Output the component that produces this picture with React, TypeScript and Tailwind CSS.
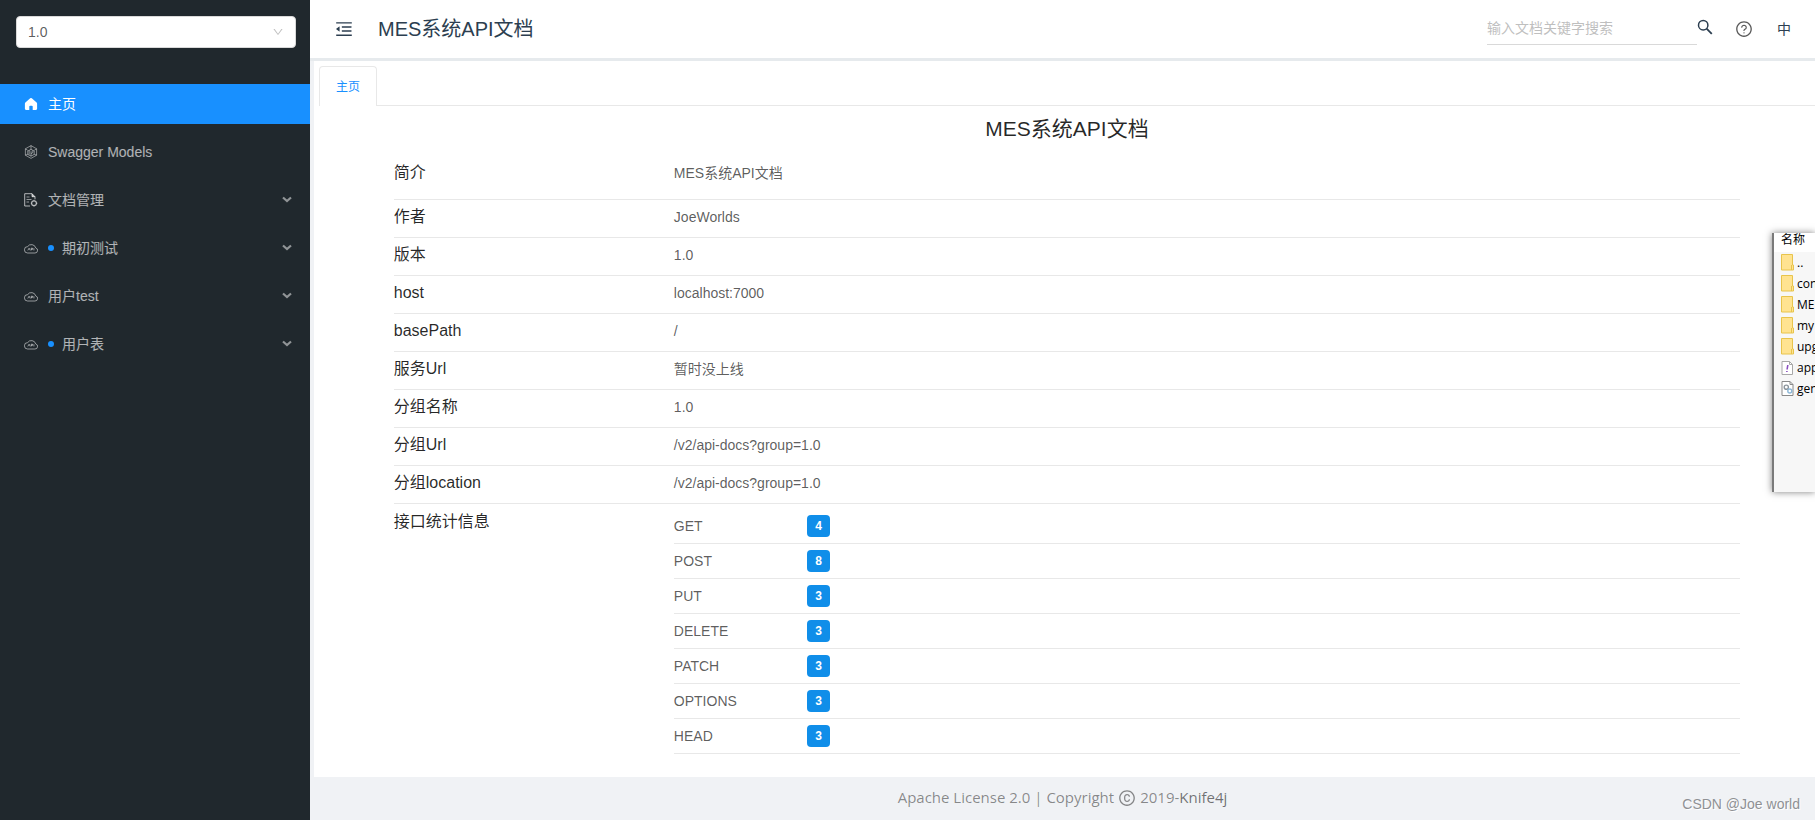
import type { ReactNode } from 'react';
import {
  AiOutlineCopyright,
  AiOutlineDown,
  AiOutlineMenuFold,
  AiOutlineQuestionCircle,
} from 'react-icons/ai';

interface MenuEntry {
  label: string;
  icon: ReactNode;
  active?: boolean;
  dot?: boolean;
  expandable?: boolean;
}

const HomeIcon = () => (
  <svg viewBox="0 0 14 14" className="size-3.5" fill="currentColor">
    <path
      fillRule="evenodd"
      d="M6.2 1.3a1.2 1.2 0 0 1 1.6 0l4.8 4.2c.4.4.5.8.5 1.2v5.1c0 .7-.5 1.2-1.2 1.2H8.7V9.6c0-.5-.3-.8-.8-.8H6.1c-.5 0-.8.3-.8.8V13H2.1c-.7 0-1.2-.5-1.2-1.2V6.7c0-.5.2-.9.5-1.2z"
    />
  </svg>
);

const ModelIcon = () => (
  <svg viewBox="0 0 14 14" className="size-3.5" fill="none" stroke="currentColor" strokeWidth="0.7">
    <path d="M7 .6 12.6 3.8v6.4L7 13.4 1.4 10.2V3.8z" />
    <path d="M7 .6v4M1.4 3.8l2.4 1.6M12.6 3.8l-2.4 1.6M7 4.4 3.8 6v3.4L7 11.2l3.2-1.8V6zM5.2 5.4v4.2M7 6.2v5M8.8 5.4v2.2l-1.8 1M1.4 10.2l2.4-.9M12.6 10.2l-2.4-.9" />
  </svg>
);

const DocIcon = () => (
  <svg viewBox="0 0 14 14" className="size-3.5" fill="none" stroke="currentColor">
    <path d="M6 13H.7V.7H8l3 3v2.6" />
    <path d="M8 .7v3h3" fill="currentColor" />
    <path d="M2.5 4h3M2.5 6.5h5M2.5 9H5" strokeWidth="0.8" />
    <circle cx="10" cy="10.2" r="2.4" strokeWidth="1.2" />
    <path d="M10 6.8v1M10 12.6v1M6.8 10.2h.8M12.4 10.2h1" strokeWidth="0.9" />
  </svg>
);

const CloudIcon = () => (
  <svg viewBox="0 0 14 14" className="size-3.5" fill="none" stroke="currentColor" strokeWidth="0.8">
    <path d="M3.6 12h7.3a2.6 2.6 0 0 0 .8-5.1A4.5 4.5 0 0 0 3.6 5.6 3.2 3.2 0 0 0 3.6 12z" />
    <path d="m3.8 9.4 1.3-2.2 1.1 2.2M7.2 9.4V7.2h1.3v1.2H7.2M9.9 7.2v2.2" strokeWidth="0.8" />
  </svg>
);

const menu: MenuEntry[] = [
  { label: '主页', icon: <HomeIcon />, active: true },
  { label: 'Swagger Models', icon: <ModelIcon /> },
  { label: '文档管理', icon: <DocIcon />, expandable: true },
  { label: '期初测试', icon: <CloudIcon />, dot: true, expandable: true },
  { label: '用户test', icon: <CloudIcon />, expandable: true },
  { label: '用户表', icon: <CloudIcon />, dot: true, expandable: true },
];

const info = [
  ['作者', 'JoeWorlds'],
  ['版本', '1.0'],
  ['host', 'localhost:7000'],
  ['basePath', '/'],
  ['服务Url', '暂时没上线'],
  ['分组名称', '1.0'],
  ['分组Url', '/v2/api-docs?group=1.0'],
  ['分组location', '/v2/api-docs?group=1.0'],
];

const methods: [string, number][] = [
  ['GET', 4],
  ['POST', 8],
  ['PUT', 3],
  ['DELETE', 3],
  ['PATCH', 3],
  ['OPTIONS', 3],
  ['HEAD', 3],
];

function Sidebar() {
  return (
    <aside className="w-[310px] shrink-0 bg-[#20282d]">
      <div className="relative py-4 pr-3.5 pl-4">
        <select
          aria-label="分组"
          className="block h-8 w-full appearance-none rounded border border-[#d9d9d9] bg-white px-[11px] text-sm text-black/65"
        >
          <option>1.0</option>
        </select>
        <AiOutlineDown className="pointer-events-none absolute top-[26px] right-[26px] size-3 text-black/25" />
      </div>
      <nav className="mt-5">
        <ul className="space-y-2">
          {menu.map(item => {
            const content = (
              <>
                {item.icon}
                <span className="ml-2.5 flex items-center gap-2">
                  {item.dot && <span className="size-1.5 rounded-full bg-[#1890ff]" />}
                  {item.label}
                </span>
                {item.expandable && (
                  <svg viewBox="0 0 10 8" className="ml-auto h-2 w-2.5 text-white/50" fill="none" stroke="currentColor" strokeWidth="2.2">
                    <path d="m1 1.5 4 3.6 4-3.6" />
                  </svg>
                )}
              </>
            );
            if (item.expandable) {
              return (
                <li key={item.label}>
                  <button type="button" className="flex h-10 w-full items-center pr-[18px] pl-6 text-sm text-white/65">
                    {content}
                  </button>
                </li>
              );
            }
            return (
              <li key={item.label}>
                <a
                  href="#"
                  className={`flex h-10 items-center pl-6 text-sm ${item.active ? 'bg-[#1890ff] text-white' : 'text-white/65'}`}
                >
                  {content}
                </a>
              </li>
            );
          })}
        </ul>
      </nav>
    </aside>
  );
}

function Header() {
  return (
    <header className="flex h-[61px] items-center border-b-3 border-[#e6eaed] bg-white pr-5 pl-6 text-[#2c3e50]">
      <button type="button" aria-label="收起菜单">
        <AiOutlineMenuFold className="size-5" />
      </button>
      <h1 className="ml-6 text-xl">MES系统API文档</h1>
      <input
        type="text"
        aria-label="搜索"
        placeholder="输入文档关键字搜索"
        className="ml-auto h-8 w-[210px] border-b border-[#d9d9d9] pb-0.5 text-sm placeholder:text-[#bfbfbf]"
      />
      <button type="button" aria-label="查询" className="pb-1">
        <svg viewBox="0 0 16 16" className="size-4" fill="none" stroke="currentColor" strokeWidth="1.5">
          <circle cx="6.2" cy="6.2" r="4.7" />
          <path d="m9.6 9.6 5.2 5.2" strokeWidth="1.8" />
        </svg>
      </button>
      <a href="#" aria-label="帮助" className="ml-[22px] text-black/65">
        <AiOutlineQuestionCircle className="size-[18px]" />
      </a>
      <button type="button" className="ml-5 px-1 text-sm">中</button>
    </header>
  );
}

function InfoTable() {
  return (
    <table className="mx-auto w-[90%] table-fixed border-separate border-spacing-0 text-left text-sm text-black/65">
      <colgroup>
        <col className="w-[20.8%]" />
        <col />
      </colgroup>
      <tbody>
        <tr>
          <th className="h-12 border-b border-[#e8e8e8] pb-1.5 text-base font-normal text-black/85">简介</th>
          <td className="h-12 border-b border-[#e8e8e8] pb-1.5">MES系统API文档</td>
        </tr>
        {info.map(([label, value]) => (
          <tr key={label}>
            <th className="h-[38px] border-b border-[#e8e8e8] pb-1 text-base font-normal text-black/85">{label}</th>
            <td className="h-[38px] border-b border-[#e8e8e8] pb-1">{value}</td>
          </tr>
        ))}
        <tr>
          <th className="pt-1.5 align-top text-base font-normal text-black/85">接口统计信息</th>
          <td className="pt-[5px]">
            <table className="w-full table-fixed border-separate border-spacing-0">
              <colgroup>
                <col className="w-[12.5%]" />
                <col />
              </colgroup>
              <tbody>
                {methods.map(([method, count]) => (
                  <tr key={method}>
                    <td className="h-[35px] border-b border-[#e8e8e8]">{method}</td>
                    <td className="h-[35px] border-b border-[#e8e8e8]">
                      <span className="flex h-[22px] w-[23px] items-center justify-center rounded bg-[#108ee9] text-xs font-bold text-white">
                        {count}
                      </span>
                    </td>
                  </tr>
                ))}
              </tbody>
            </table>
          </td>
        </tr>
      </tbody>
    </table>
  );
}

const Folder = () => (
  <svg viewBox="0 0 14 17" className="h-[17px] w-3.5 shrink-0">
    <path d="M.5.5h11v10.5h1v5H.5z" fill="#ffe391" stroke="#e8c44c" />
    <path d="M10.5 11v5" stroke="#e8c44c" />
  </svg>
);

const YmlFile = () => (
  <svg viewBox="0 0 14 17" className="h-[17px] w-3.5 shrink-0" fill="none">
    <path d="M1 2.5h7.5l3 3v10H1z" fill="#fff" stroke="#a8a8a8" />
    <path d="M8.5 2.5v3h3" stroke="#a8a8a8" />
    <path d="m6.8 6-.7 4.5M5.9 12v1" stroke="#8a4fc0" strokeWidth="1.6" />
  </svg>
);

const ConfigFile = () => (
  <svg viewBox="0 0 14 17" className="h-[17px] w-3.5 shrink-0" fill="none">
    <path d="M1 1.5h8l3 3v11H1z" fill="#fff" stroke="#8a8a8a" />
    <path d="M9 1.5v3h3" stroke="#8a8a8a" />
    <circle cx="5.3" cy="7.2" r="2.1" stroke="#8c959c" strokeWidth="1.4" />
    <circle cx="8.8" cy="11" r="2" stroke="#8db8d8" strokeWidth="1.4" />
  </svg>
);

const files = [
  { name: '..', icon: <Folder /> },
  { name: 'con', icon: <Folder /> },
  { name: 'ME', icon: <Folder /> },
  { name: 'my', icon: <Folder /> },
  { name: 'upg', icon: <Folder /> },
  { name: 'app', icon: <YmlFile /> },
  { name: 'gen', icon: <ConfigFile /> },
];

// File window parked at the right edge of the screen, mostly off it
function FileWindow() {
  return (
    <div className="absolute top-[233px] right-0 h-[259px] w-[43px] border-l-2 border-[#7a7a7a] bg-[#f7f7f7] font-['Open_Sans','Noto_Sans_CJK_SC',sans-serif] text-xs text-black shadow-[0_0_7px_rgba(0,0,0,0.5)]">
      <div className="h-[19px] bg-white pl-[7px] leading-[14px]">名称</div>
      <ul className="pl-[7px] font-medium">
        {files.map(file => (
          <li key={file.name} className="flex h-[21px] items-center gap-0.5">
            {file.icon}
            {file.name}
          </li>
        ))}
      </ul>
    </div>
  );
}

export default function App() {
  return (
    <div className="relative flex min-h-screen overflow-hidden bg-[#f0f2f5] font-['Liberation_Sans','Noto_Sans_CJK_SC',sans-serif]">
      <Sidebar />
      <div className="flex min-w-0 flex-1 flex-col">
        <Header />
        <main className="ml-1 flex-1 bg-white pt-[5px] pb-5 pl-[5px]">
          <div role="tablist" className="flex border-b border-[#e8e8e8]">
            <button
              type="button"
              role="tab"
              aria-selected="true"
              className="-mb-px h-10 rounded-t border border-b-0 border-[#e8e8e8] bg-white px-4 text-xs text-[#1890ff]"
            >
              主页
            </button>
          </div>
          <h2 className="text-center text-[21px] leading-[46px] text-black/85">MES系统API文档</h2>
          <InfoTable />
        </main>
        <footer className="flex h-[43px] items-center justify-center gap-1 pb-0.5 font-['Open_Sans',sans-serif] text-[15px] text-black/45">
          Apache License 2.0 | Copyright
          <AiOutlineCopyright className="size-[18px]" />
          <span>
            2019-<a href="#" className="text-black/55">Knife4j</a>
          </span>
        </footer>
      </div>
      <FileWindow />
      <span className="absolute right-[15px] bottom-1.5 text-sm text-[#8f9194] [text-shadow:1px_1px_0_#ffffff]">CSDN @Joe world</span>
    </div>
  );
}
